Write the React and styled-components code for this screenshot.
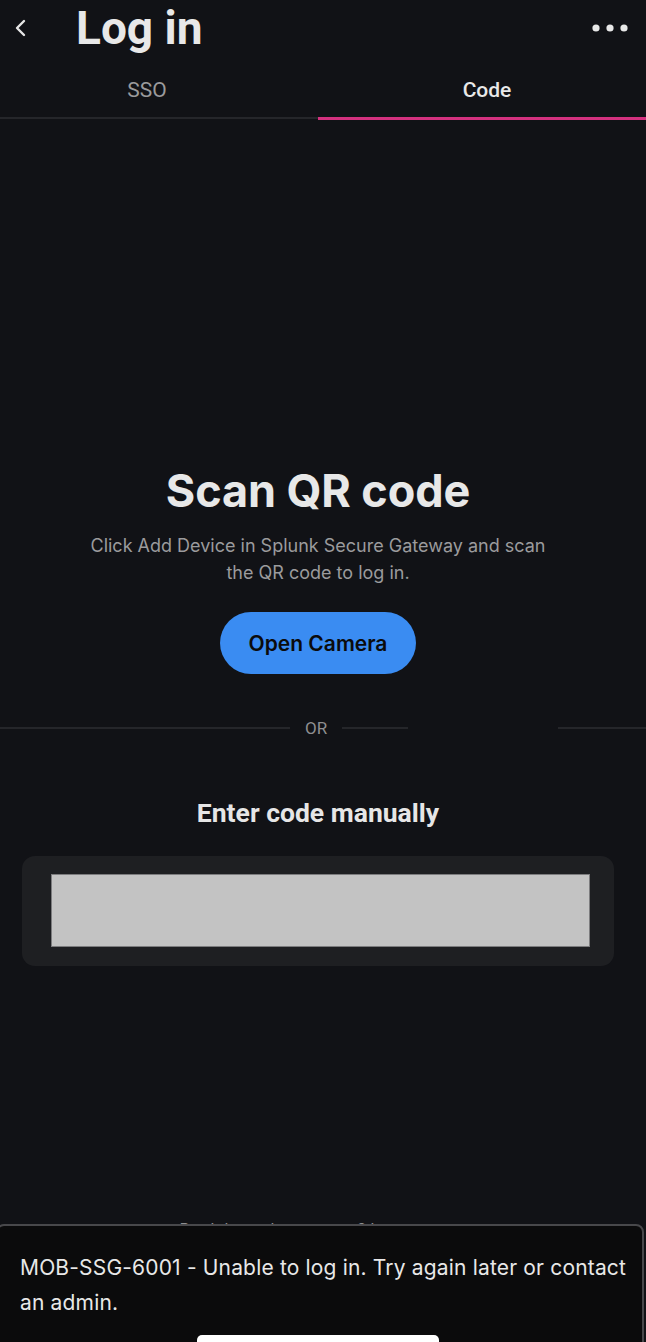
import React from "react";
import styled, { createGlobalStyle } from "styled-components";

const Global = createGlobalStyle`
  html, body { margin: 0; padding: 0; background: #111216; }
  * { box-sizing: border-box; }
`;

const Screen = styled.div`
  position: relative;
  width: 646px;
  height: 1342px;
  overflow: hidden;
  background: #111216;
  display: flex;
  flex-direction: column;
  font-family: Inter, "Noto Sans", sans-serif;
  color: #e6e6e6;
`;

const Header = styled.header`
  height: 56px;
  display: flex;
  align-items: center;
  padding: 0 16px 0 10px;
`;

const IconButton = styled.button`
  background: none;
  border: 0;
  padding: 0;
  display: flex;
  align-items: center;
  justify-content: center;
  color: #e6e6e6;
  width: ${(p) => p.$w || 24}px;
  height: 40px;
`;

const Title = styled.h1`
  margin: 0 0 0 46px;
  flex: 1;
  font-family: Roboto, sans-serif;
  font-weight: 700;
  font-size: 46px;
  line-height: 56px;
  letter-spacing: 0;
  color: #e8e8e8;
`;

const Tabs = styled.nav`
  display: flex;
`;

const Tab = styled.div`
  flex: 0 0 ${(p) => p.$basis};
  height: ${(p) => (p.$active ? 64 : 63)}px;
  margin-bottom: ${(p) => (p.$active ? 0 : 1)}px;
  padding: 22px ${(p) => p.$pr}px 0 ${(p) => p.$pl}px;
  text-align: center;
  font-family: Roboto, sans-serif;
  font-size: 21px;
  line-height: 24px;
  font-weight: ${(p) => (p.$active ? 500 : 400)};
  color: ${(p) => (p.$active ? "#e8e8e8" : "#9a9a9c")};
  border-bottom: ${(p) => (p.$active ? "3px solid #d4317f" : "2px solid #25262a")};
`;

const Content = styled.main`
  display: flex;
  flex-direction: column;
  align-items: center;
  padding: 345px 10px 0 0;
`;

const Heading = styled.h2`
  margin: 0;
  font-size: 45px;
  line-height: 52px;
  font-weight: 700;
  color: #e8e8e8;
  letter-spacing: -0.1px;
`;

const Subtitle = styled.p`
  margin: 15px 0 0;
  width: 480px;
  text-align: center;
  font-size: 18px;
  line-height: 27px;
  color: #9b9b9d;
`;

const PrimaryButton = styled.button`
  margin-top: 26px;
  width: 196px;
  height: 62px;
  border: 0;
  border-radius: 31px;
  background: #3a8cf2;
  color: #0b0b0c;
  font-family: Inter, sans-serif;
  font-size: 21px;
  font-weight: 600;
`;

const Divider = styled.div`
  align-self: stretch;
  margin: 44px -10px 0 0;
  display: flex;
  align-items: center;
  height: 20px;
`;

const Rule = styled.span`
  display: block;
  height: 2px;
  background: #25262a;
  flex: ${(p) => (p.$w ? `0 0 ${p.$w}px` : "1")};
  margin-left: ${(p) => p.$ml || 0}px;
`;

const OrText = styled.span`
  margin: 0 15px;
  font-family: Roboto, sans-serif;
  font-size: 17px;
  color: #8e8e90;
`;

const SectionTitle = styled.h3`
  margin: 60px 0 0;
  font-family: Roboto, sans-serif;
  font-size: 26.5px;
  line-height: 30px;
  font-weight: 700;
  color: #e6e6e6;
`;

const CodeCard = styled.div`
  align-self: flex-start;
  margin: 28px 0 0 22px;
  width: 592px;
  height: 110px;
  padding: 18px 24px 19px 29px;
  border-radius: 13px;
  background: #1e1f22;
`;

const CodeField = styled.div`
  width: 100%;
  height: 100%;
  background: #c3c3c3;
  border: 1px solid #7c7c7e;
`;

const FooterNote = styled.p`
  margin: 252px 0 0;
  font-size: 16px;
  line-height: 22px;
  color: #8e8e90;
`;

const Toast = styled.div`
  position: absolute;
  left: -4px;
  right: 2px;
  top: 1224px;
  bottom: -12px;
  background: #0b0b0c;
  border: 2px solid #48484b;
  border-radius: 8px;
  padding: 24px 12px 0 22px;
  font-size: 21px;
  letter-spacing: 0.17px;
  line-height: 35px;
  color: #e8e8e8;
`;

const HomeIndicator = styled.div`
  position: absolute;
  left: 197px;
  top: 1335px;
  width: 242px;
  height: 14px;
  border-radius: 5px;
  background: #ffffff;
`;

export default function App() {
  return (
    <>
      <Global />
      <Screen>
        <Header>
          <IconButton aria-label="Back" $w={20}>
            <svg width="14" height="20" viewBox="0 0 14 20">
              <path d="M11 3 L4 10 L11 17" fill="none" stroke="#e6e6e6" strokeWidth="2.4" strokeLinecap="round" strokeLinejoin="round" />
            </svg>
          </IconButton>
          <Title>Log in</Title>
          <IconButton aria-label="More" $w={40}>
            <svg width="36" height="10" viewBox="0 0 36 10">
              <circle cx="4" cy="5" r="3.6" fill="#e8e8e8" />
              <circle cx="18" cy="5" r="3.6" fill="#e8e8e8" />
              <circle cx="32" cy="5" r="3.6" fill="#e8e8e8" />
            </svg>
          </IconButton>
        </Header>
        <Tabs>
          <Tab $basis="318px" $pl={0} $pr={24}>SSO</Tab>
          <Tab $basis="328px" $pl={10} $pr={0} $active>Code</Tab>
        </Tabs>
        <Content>
          <Heading>Scan QR code</Heading>
          <Subtitle>
            Click Add Device in Splunk Secure Gateway and scan the QR code to log in.
          </Subtitle>
          <PrimaryButton>Open Camera</PrimaryButton>
          <Divider>
            <Rule $w={290} />
            <OrText>OR</OrText>
            <Rule $w={66} />
            <Rule $ml={150} />
          </Divider>
          <SectionTitle>Enter code manually</SectionTitle>
          <CodeCard>
            <CodeField />
          </CodeCard>
          <FooterNote>Don't have the gateway? Learn more</FooterNote>
        </Content>
        <Toast>MOB-SSG-6001 - Unable to log in. Try again later or contact an admin.</Toast>
        <HomeIndicator />
      </Screen>
    </>
  );
}
